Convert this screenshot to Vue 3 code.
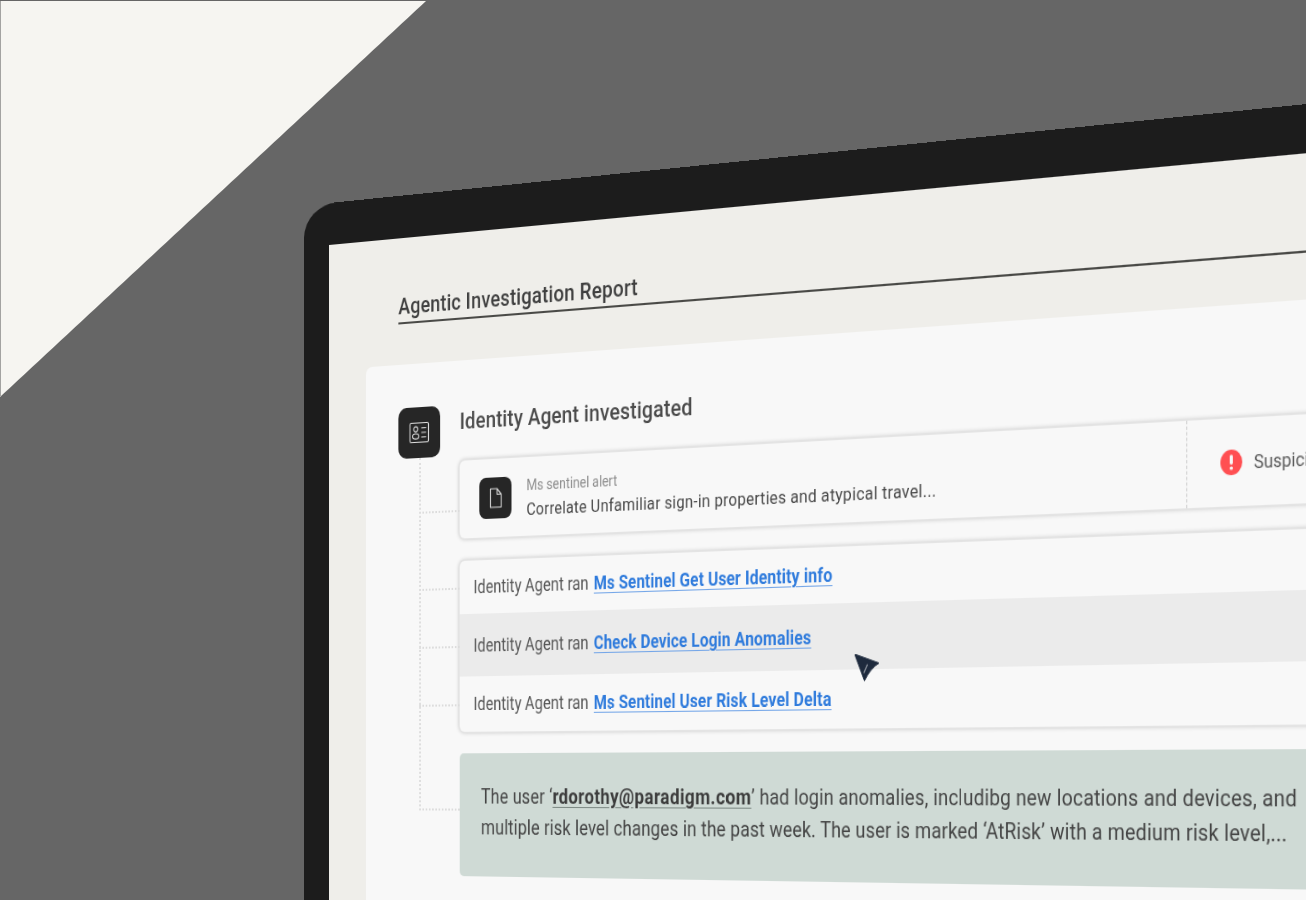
<template>
  <div class="page">
    <div class="device">
      <div class="screen">
        <h2 class="report-title">Agentic Investigation Report</h2>

        <div class="card">
          <div class="agent">
            <div class="agent-icon">
              <svg width="26" height="24" viewBox="0 0 26 24" fill="none" stroke="#dedede" stroke-width="1.2">
                <rect x="1.5" y="2.5" width="23" height="19" rx="1.5" />
                <circle cx="8.6" cy="8.6" r="2.5" />
                <ellipse cx="8.6" cy="15.6" rx="4" ry="2.6" />
                <path d="M15.5 7.5h6M15.5 12h6M15.5 16.5h6" />
              </svg>
            </div>

            <div class="agent-body">
              <h3 class="agent-title">Identity Agent investigated</h3>

              <div class="alert-box">
                <div class="alert-main">
                  <div class="doc-icon">
                    <svg width="20" height="24" viewBox="0 0 20 24" fill="none" stroke="#d8d8d8" stroke-width="1.2">
                      <path d="M3.5 3h8l5 5.5V21h-13z" stroke-linejoin="round" />
                      <path d="M11.5 3v5.5h5" stroke-linejoin="round" />
                    </svg>
                  </div>
                  <div class="alert-text">
                    <span class="alert-label">Ms sentinel alert</span>
                    <span class="alert-name">Correlate Unfamiliar sign-in properties and atypical travel...</span>
                  </div>
                </div>
                <div class="alert-side">
                  <svg width="21" height="22" viewBox="0 0 21 22">
                    <ellipse cx="10.5" cy="11" rx="10.5" ry="11" fill="#ff4f52" />
                    <rect x="9" y="4.5" width="3" height="8.5" rx="1.4" fill="#f8f8f8" />
                    <circle cx="10.5" cy="16" r="1.6" fill="#f8f8f8" />
                  </svg>
                  <span>Suspicious</span>
                </div>
              </div>

              <ul class="tool-list">
                <li v-for="tool in tools" :key="tool.name" class="tool-row" :class="{ hovered: tool.hovered }">
                  Identity Agent ran <a class="tool-link">{{ tool.name }}</a>
                  <svg v-if="tool.hovered" class="cursor" width="28" height="26" viewBox="0 0 28 26">
                    <path d="M0 0L26 8.6Q17 13 10.5 24.5z" fill="#1e2a3d" stroke="#1e2a3d" stroke-width="1" stroke-linejoin="round" />
                    <path d="M10 17L13.5 10" stroke="#8f96a0" stroke-width="1.2" stroke-linecap="round" />
                  </svg>
                </li>
              </ul>

              <div class="summary">
                <p>
                  <span class="line-one">The user ‘<strong>rdorothy@paradigm.com</strong>’ had login anomalies, includibg new locations and devices, and</span>
                  <span class="line-two">multiple risk level changes in the past week. The user is marked ‘AtRisk’ with a medium risk level,...</span>
                </p>
              </div>
            </div>
          </div>
        </div>
      </div>
    </div>
  </div>
</template>

<script setup>
const tools = [
  { name: 'Ms Sentinel Get User Identity info', hovered: false },
  { name: 'Check Device Login Anomalies', hovered: true },
  { name: 'Ms Sentinel User Risk Level Delta', hovered: false }
]
</script>

<style>
body {
  margin: 0;
  background: #666;
}
</style>

<style scoped>
.page {
  width: 1306px;
  height: 900px;
  overflow: hidden;
  font-family: Roboto, "Liberation Sans", sans-serif;
  color: #474747;
  background:
    linear-gradient(#a3a3a1, #a3a3a1) 0 1px / 1px 395px no-repeat,
    linear-gradient(to bottom right, #f6f5f1 calc(50% - 0.5px), #666 calc(50% + 0.5px)) 0 1px / 426px 396px no-repeat,
    #666;
}

/* whole laptop is tilted, vanishing point sits far off to the left */
.device {
  width: 1232px;
  height: 800px;
  padding: 42px 0 0 32px;
  box-sizing: border-box;
  background: #1c1c1c;
  border-top-left-radius: 42px 32px;
  transform-origin: 0 0;
  transform: matrix3d(0.7344, -0.10649, 0, -0.000136, 0, 1, 0, 0, 0, 0, 1, 0, 305.5, 206.41, 0, 1.00435);
}

.screen {
  height: 758px;
  padding-top: 54px;
  box-sizing: border-box;
  background: #efeeea;
  overflow: hidden;
}

.report-title {
  margin: 0 0 40px 88px;
  padding-bottom: 1px;
  border-bottom: 2px solid #4a4a47;
  font-size: 22px;
  line-height: 28px;
  font-weight: 500;
  letter-spacing: 0.3px;
  color: #3f3f3f;
}

.card {
  margin-left: 47px;
  padding: 43px 0 0 41px;
  height: 640px;
  background: #f8f8f8;
  border-radius: 8px 0 0 0;
}

.agent {
  position: relative;
  display: grid;
  grid-template-columns: 52px 1fr;
  column-gap: 24px;
}

.agent::before {
  content: "";
  position: absolute;
  left: 26px;
  top: 50px;
  height: 343px;
  border-left: 2px dotted #dcdcdc;
}

.agent-icon,
.doc-icon {
  display: flex;
  align-items: center;
  justify-content: center;
  background: #262626;
}

.agent-icon {
  width: 52px;
  height: 50px;
  border-radius: 10px;
}

.doc-icon {
  flex: none;
  width: 39px;
  height: 40px;
  border-radius: 8px;
}

.agent-title {
  margin: 0 0 23px;
  font-size: 22.5px;
  line-height: 32px;
  font-weight: 500;
  letter-spacing: 0.2px;
  color: #4b4b4b;
}

.alert-box,
.tool-list {
  box-shadow: 0 0 0 1px #e4e4e4, 0 0 4px 1px rgba(0, 0, 0, 0.2);
  border-radius: 6px;
  background: #f8f8f8;
}

.alert-box {
  position: relative;
  display: flex;
  height: 76px;
}

.alert-box::before,
.tool-row::before,
.summary::before {
  content: "";
  position: absolute;
  left: -50px;
  width: 50px;
  border-top: 2px dotted #dcdcdc;
}

.alert-box::before {
  top: 48px;
}

.alert-main {
  flex: none;
  width: 794px;
  padding-left: 24px;
  box-sizing: border-box;
  display: flex;
  align-items: center;
  gap: 18px;
  border-right: 1px dashed #cfcfcf;
}

.alert-text {
  display: flex;
  flex-direction: column;
  gap: 3px;
  padding-top: 4px;
}

.alert-label {
  font-size: 14.5px;
  line-height: 16px;
  color: #8d8d8d;
}

.alert-name {
  font-size: 17px;
  line-height: 22px;
  letter-spacing: 0.3px;
  color: #484848;
  white-space: nowrap;
}

.alert-side {
  display: flex;
  align-items: center;
  gap: 11px;
  padding-left: 32px;
  font-size: 16px;
  color: #5a5a5a;
}

.tool-list {
  margin: 22px 0 21px;
  padding: 0;
  list-style: none;
}

.tool-row {
  position: relative;
  display: flex;
  align-items: center;
  gap: 6px;
  height: 52px;
  padding-left: 17px;
  font-size: 17.5px;
  letter-spacing: 0.05px;
  color: #555;
}

.tool-row::before {
  top: 50%;
}

.tool-row.hovered {
  height: 61px;
  background: #ebebeb;
}

.tool-row:last-child {
  height: 54px;
}

.tool-link {
  font-weight: 700;
  letter-spacing: 0.14px;
  color: #2f7bdc;
  text-decoration: underline;
  text-decoration-color: #74a6e8;
  text-decoration-thickness: 1px;
  text-underline-offset: 3px;
}

.cursor {
  position: absolute;
  left: 454px;
  top: 47px;
  z-index: 2;
}

.summary {
  position: relative;
  height: 120px;
  padding: 28px 0 0 26px;
  box-sizing: border-box;
  background: #cfdad5;
  border-radius: 5px;
}

.summary::before {
  top: 54px;
}

.summary p {
  margin: 0;
  font-size: 19.5px;
  line-height: 29.5px;
  color: #444;
  white-space: nowrap;
}

.line-one,
.line-two {
  display: block;
}

.line-one {
  letter-spacing: 0.21px;
}

.line-two {
  letter-spacing: 0.15px;
}

.summary strong {
  font-weight: 700;
  letter-spacing: 0.5px;
  color: #3c3c3c;
  text-decoration: underline;
  text-decoration-color: #7e8a85;
  text-underline-offset: 3px;
}
</style>
